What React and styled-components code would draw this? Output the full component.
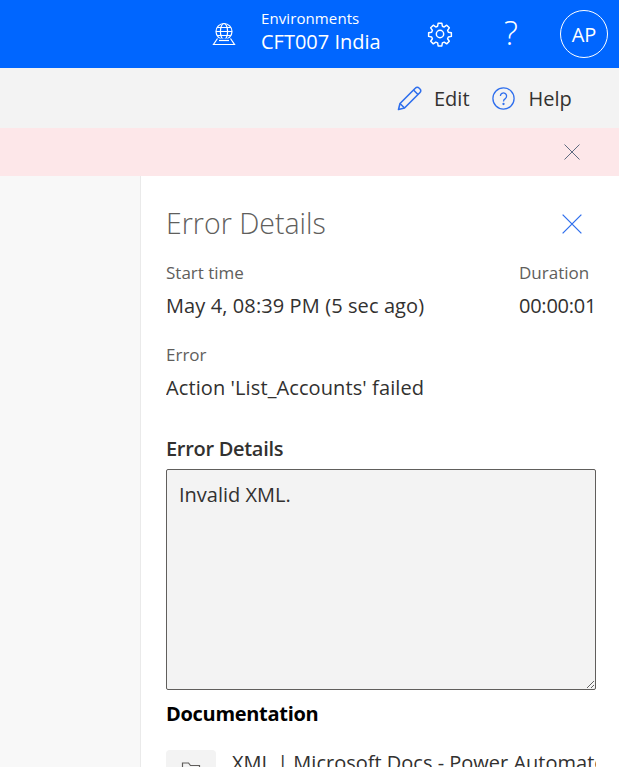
import React from 'react';
import styled, { createGlobalStyle } from 'styled-components';

const GlobalStyle = createGlobalStyle`
  html, body {
    margin: 0;
    padding: 0;
    height: 100%;
    overflow: hidden;
    background: #fff;
    font-family: "Open Sans", "Liberation Sans", sans-serif;
  }
`;

const Page = styled.div`
  width: 619px;
  height: 767px;
  display: flex;
  flex-direction: column;
  overflow: hidden;
`;

const Header = styled.header`
  height: 68px;
  flex: none;
  background: #0066ff;
  color: #fff;
  display: flex;
  align-items: center;
  padding-left: 211px;
`;

const EnvBlock = styled.div`
  margin-left: 24px;
  width: 166px;
  padding-bottom: 6px;
  display: flex;
  flex-direction: column;
`;

const EnvLabel = styled.div`
  font-size: 15px;
  line-height: 20px;
  letter-spacing: 0.1px;
`;

const EnvName = styled.div`
  font-size: 20px;
  line-height: 27px;
`;

const HeaderIcon = styled.div`
  width: ${(p) => p.$w}px;
  display: flex;
  justify-content: center;
`;

const HelpGlyph = styled.div`
  width: 22px;
  margin-left: 47px;
  margin-right: 38px;
  padding-bottom: 3px;
  text-align: center;
  font-size: 33px;
  line-height: 40px;
  font-weight: 300;
`;

const Avatar = styled.div`
  width: 46px;
  height: 46px;
  border: 1px solid #fff;
  border-radius: 50%;
  display: flex;
  align-items: center;
  justify-content: center;
  font-size: 20px;
`;

const CommandBar = styled.div`
  height: 60px;
  flex: none;
  background: #f3f3f3;
  display: flex;
  align-items: center;
  padding-left: 397px;
`;

const Command = styled.div`
  display: flex;
  align-items: center;
  gap: ${(p) => p.$gap}px;
  margin-right: ${(p) => p.$mr || 0}px;
  font-size: 20px;
  color: #323130;
`;

const Banner = styled.div`
  height: 48px;
  flex: none;
  background: #fde7e9;
  display: flex;
  align-items: center;
  padding-left: 564px;
`;

const Body = styled.div`
  flex: 1;
  display: flex;
  min-height: 0;
`;

const LeftRail = styled.div`
  width: 140px;
  flex: none;
  background: #f8f8f8;
  border-right: 1px solid #eaeaea;
`;

const Panel = styled.section`
  width: 430px;
  margin-left: 25px;
  display: flex;
  flex-direction: column;
  overflow: hidden;
`;

const TitleRow = styled.div`
  height: 42px;
  margin-top: 27px;
  display: flex;
  align-items: center;
  justify-content: space-between;
  padding-right: 14px;
`;

const Title = styled.h1`
  margin: 0;
  padding-bottom: 2px;
  font-size: 28.5px;
  line-height: 40px;
  font-weight: 300;
  color: #605e5c;
`;

const MetaRow = styled.div`
  display: flex;
  justify-content: space-between;
  margin-top: 17px;
  white-space: nowrap;
`;

const MetaColumn = styled.div`
  width: ${(p) => p.$w || 'auto'};
`;

const MetaLabel = styled.div`
  font-size: 17px;
  line-height: 22px;
  color: #605e5c;
`;

const MetaValue = styled.div`
  margin-top: 9px;
  font-size: 20px;
  line-height: 26px;
  letter-spacing: ${(p) => p.$spacing || '0.1px'};
  color: #323130;
`;

const ErrorBlock = styled.div`
  margin-top: 25px;
`;

const SectionLabel = styled.h2`
  margin: 35px 0 8px;
  font-size: 20px;
  line-height: 25px;
  font-weight: 600;
  letter-spacing: -0.3px;
  color: #323130;
`;

const DetailsBox = styled.textarea`
  box-sizing: border-box;
  display: block;
  width: 430px;
  height: 221px;
  flex: none;
  margin: 0;
  padding: 12px;
  border: 1px solid #605e5c;
  border-radius: 2px;
  background: #f3f3f3;
  color: #323130;
  font-family: inherit;
  font-size: 20px;
  line-height: 26px;
  outline: none;
`;

const DocsHeading = styled.h2`
  margin: 11px 0 0;
  font-size: 20px;
  line-height: 26px;
  font-weight: 700;
  letter-spacing: -0.3px;
  color: #000;
`;

const DocRow = styled.div`
  display: flex;
  gap: 16px;
  margin-top: 23px;
  white-space: nowrap;
`;

const DocThumb = styled.div`
  width: 50px;
  height: 50px;
  flex: none;
  border-radius: 4px;
  background: #f3f3f3;
  display: flex;
  justify-content: center;
  padding-top: 10px;
  box-sizing: border-box;
`;

const DocTitle = styled.div`
  font-size: 20px;
  line-height: 26px;
  color: #323130;
`;

const GlobeIcon = () => (
  <svg width="26" height="26" viewBox="0 0 26 26" fill="none" stroke="#fff" strokeWidth="1.2">
    <circle cx="13" cy="10.5" r="8" />
    <ellipse cx="13" cy="10.5" rx="3.6" ry="8" />
    <path d="M5 10.5h16M6 6.5h14M6 14.5h14" />
    <path d="M6.500 17.500 2.500 23.500h21l-4-6" fill="#0066ff" />
    <path d="M8 19.500h10" />
  </svg>
);

const GearIcon = () => (
  <svg width="26" height="26" viewBox="0 0 24 24" fill="none" stroke="#fff" strokeWidth="1.35" strokeLinejoin="round">
    <path d="M10.300 2h3.400l.5 2.800 1.700.7 2.300-1.600 2.400 2.400-1.600 2.300.7 1.700 2.800.5v3.400l-2.800.5-.7 1.700 1.600 2.300-2.400 2.400-2.300-1.600-1.700.7-.5 2.800h-3.400l-.5-2.800-1.700-.7-2.300 1.600-2.400-2.400 1.600-2.300-.7-1.700-2.800-.5v-3.400l2.800-.5.7-1.700-1.600-2.300 2.400-2.400 2.300 1.600 1.700-.7z" />
    <circle cx="12" cy="12" r="3.400" />
  </svg>
);

const PencilIcon = () => (
  <svg width="25" height="25" viewBox="0 0 25 25" fill="none" stroke="#2f6fed" strokeWidth="1.6" strokeLinejoin="round">
    <path d="M1.500 23.500 3 17.500 18.500 2a2.400 2.400 0 0 1 3.500 0l1 1a2.400 2.400 0 0 1 0 3.500L7.500 22z" />
    <path d="M3 17.500 7.500 22M16.500 4l4.500 4.500" />
  </svg>
);

const HelpCircleIcon = () => (
  <svg width="23" height="23" viewBox="0 0 23 23" fill="none" stroke="#2f6fed" strokeWidth="1.3">
    <circle cx="11.500" cy="11.500" r="10.600" />
    <path d="M8.400 9a3.100 3.100 0 1 1 4.900 2.600c-1.200.8-1.800 1.400-1.800 2.900" />
    <circle cx="11.500" cy="17" r=".5" fill="#2f6fed" />
  </svg>
);

const CloseIcon = ({ size, color }) => (
  <svg width={size} height={size} viewBox="0 0 16 16" fill="none" stroke={color} strokeWidth="1">
    <path d="M.5.5l15 15M15.500.5l-15 15" />
  </svg>
);

const FolderIcon = () => (
  <svg width="20" height="18" viewBox="0 0 20 18" fill="none" stroke="#605e5c" strokeWidth="1.2">
    <path d="M1.500 16V3h6l2 2.500h9V16z" />
  </svg>
);

const App = () => {
  return (
    <Page>
      <GlobalStyle />
      <Header>
        <HeaderIcon $w={26}><GlobeIcon /></HeaderIcon>
        <EnvBlock>
          <EnvLabel>Environments</EnvLabel>
          <EnvName>CFT007 India</EnvName>
        </EnvBlock>
        <HeaderIcon $w={26}><GearIcon /></HeaderIcon>
        <HelpGlyph>?</HelpGlyph>
        <Avatar>AP</Avatar>
      </Header>
      <CommandBar>
        <Command $gap={12} $mr={22}><PencilIcon />Edit</Command>
        <Command $gap={14}><HelpCircleIcon />Help</Command>
      </CommandBar>
      <Banner>
        <CloseIcon size={16} color="#5f6b80" />
      </Banner>
      <Body>
        <LeftRail />
        <Panel>
          <TitleRow>
            <Title>Error Details</Title>
            <CloseIcon size={20} color="#2f6fed" />
          </TitleRow>
          <MetaRow>
            <MetaColumn>
              <MetaLabel>Start time</MetaLabel>
              <MetaValue>May 4, 08:39 PM (5 sec ago)</MetaValue>
            </MetaColumn>
            <MetaColumn $w="77px">
              <MetaLabel>Duration</MetaLabel>
              <MetaValue $spacing="-0.25px">00:00:01</MetaValue>
            </MetaColumn>
          </MetaRow>
          <ErrorBlock>
            <MetaLabel>Error</MetaLabel>
            <MetaValue>Action 'List_Accounts' failed</MetaValue>
          </ErrorBlock>
          <SectionLabel>Error Details</SectionLabel>
          <DetailsBox readOnly value="Invalid XML." />
          <DocsHeading>Documentation</DocsHeading>
          <DocRow>
            <DocThumb><FolderIcon /></DocThumb>
            <DocTitle>XML | Microsoft Docs - Power Automate</DocTitle>
          </DocRow>
        </Panel>
      </Body>
    </Page>
  );
};

export default App;
